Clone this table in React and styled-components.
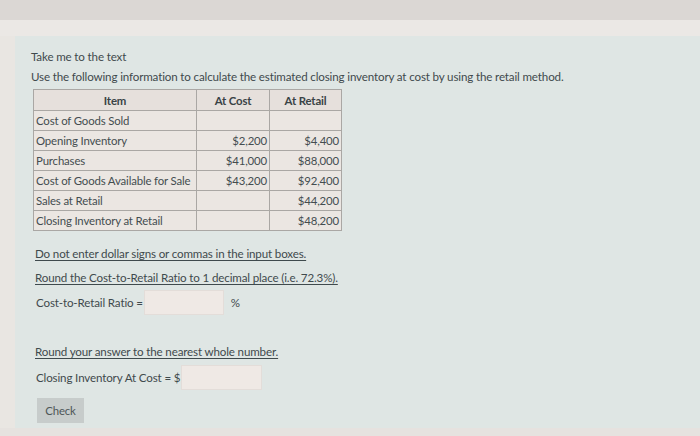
import React from "react";
import styled, { createGlobalStyle } from "styled-components";

const Global = createGlobalStyle`
  html, body { margin: 0; padding: 0; }
  body {
    width: 700px; height: 436px; overflow: hidden;
    background: #e6e2df;
    font-family: Lato, "Noto Sans", sans-serif;
  }
`;

const TopBar = styled.div`
  height: 20px;
  background: #dbd7d4;
`;

const Strip = styled.div`
  height: 16px;
  background: #ebe8e5;
`;

const Body = styled.div`
  display: flex;
  padding-left: 15px;
  background: #e9e6e2;
  height: 392px;
`;

const Panel = styled.div`
  flex: 1;
  background: #dfe6e4;
  padding: 14px 0 0 16px;
  color: #3f4a4d;
  font-size: 11.6px;
  letter-spacing: -0.15px;
`;

const Line = styled.p`
  margin: 0 0 ${p => p.$mb || 8}px 0;
  line-height: 14px;
  text-decoration: ${p => (p.$u ? "underline" : "none")};
  text-underline-offset: 2px;
  padding-left: ${p => p.$indent || 0}px;
`;

const Table = styled.table`
  border-collapse: collapse;
  margin-left: 2px;
  background: #ebe6e2;
  font-size: 11.4px;
`;

const Th = styled.th`
  height: 20px;
  padding: 0 4px;
  border: 1px solid #aaa7a4;
  background: #e6e0dc;
  font-weight: 700;
  color: #3a4346;
  text-align: center;
  width: ${p => p.$w}px;
`;

const Td = styled.td`
  height: 19px;
  padding: 0 2px;
  border: 1px solid #aaa7a4;
  text-align: ${p => (p.$r ? "right" : "left")};
  color: #444d50;
`;

const Row = styled.div`
  display: flex;
  align-items: center;
  gap: 1px;
  padding-left: 5px;
  margin-bottom: ${p => p.$mb || 0}px;
`;

const Input = styled.div`
  width: ${p => p.$w}px;
  height: 25px;
  background: #efe9e5;
  border: 1px solid #e3ddd9;
  box-sizing: border-box;
`;

const Percent = styled.span`
  margin-left: 6px;
`;

const Button = styled.div`
  width: 47px;
  height: 25px;
  margin-left: 6px;
  background: #c7cccb;
  display: flex;
  align-items: center;
  justify-content: center;
  color: #4d5658;
  font-size: 11.4px;
`;

const Spacer = styled.div`
  height: ${p => p.$h}px;
`;

const rows = [
  ["Cost of Goods Sold", "", ""],
  ["Opening Inventory", "$2,200", "$4,400"],
  ["Purchases", "$41,000", "$88,000"],
  ["Cost of Goods Available for Sale", "$43,200", "$92,400"],
  ["Sales at Retail", "", "$44,200"],
  ["Closing Inventory at Retail", "", "$48,200"],
];

export default function App() {
  return (
    <>
      <Global />
      <TopBar />
      <Strip />
      <Body>
        <Panel>
          <Line $mb={6}>Take me to the text</Line>
          <Line $mb={5}>Use the following information to calculate the estimated closing inventory at cost by using the retail method.</Line>
          <Table>
            <thead>
              <tr>
                <Th $w={154}>Item</Th>
                <Th $w={64}>At Cost</Th>
                <Th $w={63}>At Retail</Th>
              </tr>
            </thead>
            <tbody>
              {rows.map(r => (
                <tr key={r[0]}>
                  <Td>{r[0]}</Td>
                  <Td $r>{r[1]}</Td>
                  <Td $r>{r[2]}</Td>
                </tr>
              ))}
            </tbody>
          </Table>
          <Spacer $h={16} />
          <Line $u $indent={4} $mb={10}>Do not enter dollar signs or commas in the input boxes.</Line>
          <Line $u $indent={4} $mb={5}>Round the Cost-to-Retail Ratio to 1 decimal place (i.e. 72.3%).</Line>
          <Row $mb={30}>
            <span>Cost-to-Retail Ratio =</span>
            <Input $w={80} />
            <Percent>%</Percent>
          </Row>
          <Line $u $indent={4} $mb={6}>Round your answer to the nearest whole number.</Line>
          <Row $mb={8}>
            <span>Closing Inventory At Cost = $</span>
            <Input $w={81} />
          </Row>
          <Button>Check</Button>
        </Panel>
      </Body>
    </>
  );
}
